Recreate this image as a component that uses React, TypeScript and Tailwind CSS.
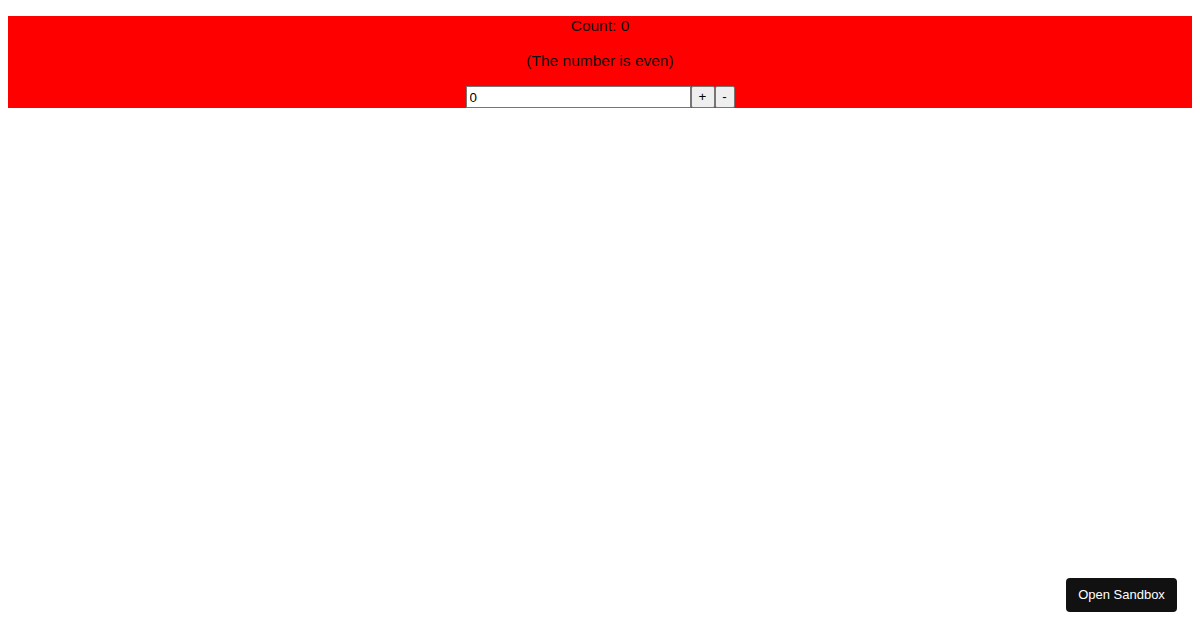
import { useState } from 'react'

export default function App() {
  const [count, setCount] = useState(0)

  return (
    <div className="relative h-[630px] w-[1200px] bg-white px-2 pt-4 font-['Liberation_Sans',Arial,sans-serif] text-black">
      <div className="flex h-[92px] flex-col items-center bg-[#ff0000] text-center text-[15.5px] leading-[18px]">
        <p className="mt-px text-[#111]">Count: {count}</p>
        <p className="mt-[17px] text-[#111]">(The number is {count % 2 === 0 ? 'even' : 'odd'})</p>
        <div className="mt-[16px] flex items-stretch">
          <input
            value={count}
            onChange={e => setCount(Number(e.target.value) || 0)}
            className="h-[22px] w-[225px] border border-[#767676] bg-white px-[3px] text-[13.33px] outline-none"
          />
          <button onClick={() => setCount(count + 1)} className="h-[22px] w-[24px] rounded-[2px] border border-[#767676] bg-[#efefef] text-[13.33px] leading-none">+</button>
          <button onClick={() => setCount(count - 1)} className="h-[22px] w-[20px] rounded-[2px] border border-[#767676] bg-[#efefef] text-[13.33px] leading-none">-</button>
        </div>
      </div>

      <button className="absolute bottom-[18px] right-[23px] h-[34px] w-[111px] rounded-[4px] bg-[#111] text-[13px] text-white">Open Sandbox</button>
    </div>
  )
}
